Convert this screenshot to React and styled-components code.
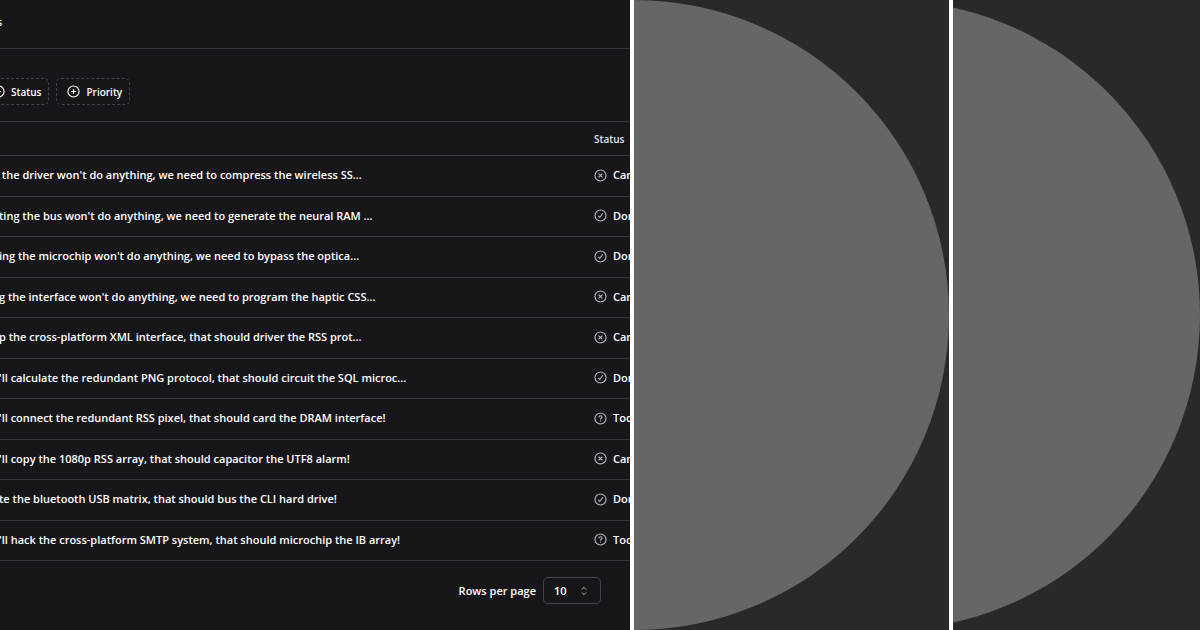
import styled, { createGlobalStyle, css } from 'styled-components';

const palette = {
	panel: '#17161b',
	line: '#37363c',
	text: '#ffffff',
	icon: '#b9b9be',
	dark: '#292929',
	gray: '#666666',
};

const GlobalStyle = createGlobalStyle`
	*{
		box-sizing: border-box;
	}
	body{
		margin: 0;
		background: #fff;
		color: ${palette.text};
		font-family: 'Open Sans', 'Noto Sans', sans-serif;
		font-size: 11px;
		font-weight: 600;
		line-height: 16px;
	}
`;

const Gallery = styled.main`
	display: grid;
	grid-template-columns: 630fr 315fr 247fr;
	gap: 4px;
	min-height: 100vh;
	overflow: hidden;
`;

const TaskPanel = styled.section`
	min-width: 0;
	overflow: hidden;
	background: ${palette.panel};
`;

const Header = styled.header`
	display: flex;
	align-items: center;
	justify-content: flex-start;
	height: 49px;
	padding-bottom: 5px;
	border-bottom: 1px solid ${palette.line};
`;

const Crumb = styled.a`
	width: 2px;
	display: flex;
	justify-content: flex-end;
	color: inherit;
	text-decoration: none;
	font-size: 10px;
`;

const Toolbar = styled.div`
	display: flex;
	gap: 7px;
	margin-left: -19px;
	padding: 29px 0 16px;
`;

const FilterButton = styled.button`
	display: flex;
	align-items: center;
	gap: 6px;
	height: 27px;
	padding: 0 7px 0 10px;
	border: 1px dashed #45444a;
	border-radius: 5px;
	background: transparent;
	color: inherit;
	font: inherit;
	font-size: 10px;
	cursor: pointer;
	svg{
		flex: none;
	}
`;

const TaskTable = styled.table`
	width: 100%;
	table-layout: fixed;
	border-collapse: separate;
	border-spacing: 0;
	border-top: 1px solid ${palette.line};
`;

const cell = css`
	padding: 0;
	border-bottom: 1px solid ${palette.line};
	text-align: left;
	vertical-align: middle;
	white-space: pre;
`;

const HeadCell = styled.th`
	${cell}
	width: ${({$width}) => $width || 'auto'};
	height: 34px;
	font-size: 10px;
	font-weight: 600;
	color: #e4e4e7;
`;

const Row = styled.tr`
	height: 40px;
	&:nth-child(odd){
		height: 41px;
	}
`;

const Cell = styled.td`
	${cell}
	padding-bottom: 2px;
`;

const TitleCell = styled(Cell)`
	text-indent: -1px;
`;

const StatusLabel = styled.span`
	display: flex;
	align-items: center;
	gap: 6px;
	svg{
		flex: none;
		color: ${palette.icon};
	}
`;

const Footer = styled.footer`
	display: flex;
	align-items: center;
	justify-content: flex-end;
	gap: 7px;
	padding: 16px 29px 26px 0;
`;

const SelectBox = styled.span`
	position: relative;
	display: flex;
	svg{
		position: absolute;
		top: 8px;
		right: 11px;
		color: ${palette.icon};
		pointer-events: none;
	}
`;

const PageSelect = styled.select`
	appearance: none;
	width: 58px;
	height: 27px;
	padding: 0 10px;
	border: 1px solid #45444a;
	border-radius: 5px;
	background: transparent;
	color: inherit;
	font: inherit;
`;

const CirclePanel = styled.section`
	display: flex;
	justify-content: flex-end;
	min-width: 0;
	overflow: hidden;
	background: ${palette.dark};
`;

const Circle = styled.div`
	flex: none;
	height: 100%;
	aspect-ratio: 1;
	border-radius: 50%;
	background: ${palette.gray};
`;

const marks = {
	plus: 'M7.5 4.5v6M4.5 7.5h6',
	Canceled: 'M5.3 5.3l4.4 4.4M9.7 5.3l-4.4 4.4',
	Done: 'M4.8 7.9l1.9 1.9 3.5-4.9',
	Todo: 'M5.7 6c0-1 .7-1.7 1.8-1.7S9.3 5 9.3 5.9c0 1.3-1.8 1.3-1.8 2.8M7.5 9.9v1.1',
};

const CircleIcon = ({name, size = 13}) => (
	<svg width={size} height={size} viewBox="0 0 15 15" fill="none" stroke="currentColor" strokeWidth="1.3" aria-hidden="true">
		<circle cx="7.5" cy="7.5" r="6.4" />
		<path d={marks[name]} />
	</svg>
);

const CaretSort = () => (
	<svg width="12" height="12" viewBox="0 0 15 15" fill="none" stroke="currentColor" strokeWidth="1.2" aria-hidden="true">
		<path d="M4.8 5.6L7.5 2.9l2.7 2.7M4.8 9.4l2.7 2.7 2.7-2.7" />
	</svg>
);

const tasks = [
	{id: 1, title: " the driver won't do anything, we need to compress the wireless SS...", status: 'Canceled'},
	{id: 2, title: "ting the bus won't do anything, we need to generate the neural RAM ...", status: 'Done'},
	{id: 3, title: "ing the microchip won't do anything, we need to bypass the optica...", status: 'Done'},
	{id: 4, title: "g the interface won't do anything, we need to program the haptic CSS...", status: 'Canceled'},
	{id: 5, title: "p the cross-platform XML interface, that should driver the RSS prot...", status: 'Canceled'},
	{id: 6, title: "'ll calculate the redundant PNG protocol, that should circuit the SQL microc...", status: 'Done'},
	{id: 7, title: "'ll connect the redundant RSS pixel, that should card the DRAM interface!", status: 'Todo'},
	{id: 8, title: "'ll copy the 1080p RSS array, that should capacitor the UTF8 alarm!", status: 'Canceled'},
	{id: 9, title: "te the bluetooth USB matrix, that should bus the CLI hard drive!", status: 'Done'},
	{id: 10, title: "'ll hack the cross-platform SMTP system, that should microchip the IB array!", status: 'Todo'},
];

const TaskItem = ({task}) => (
	<Row>
		<TitleCell>{task.title}</TitleCell>
		<Cell>
			<StatusLabel><CircleIcon name={task.status} />{task.status}</StatusLabel>
		</Cell>
	</Row>
)

const App = () => {
	return(
	<>
		<GlobalStyle />
		<Gallery>
			<TaskPanel>
				<Header><Crumb href="#tasks">s</Crumb></Header>
				<Toolbar>
					<FilterButton type="button"><CircleIcon name="plus" />Status</FilterButton>
					<FilterButton type="button"><CircleIcon name="plus" />Priority</FilterButton>
				</Toolbar>
				<TaskTable>
					<thead>
						<tr>
							<HeadCell aria-label="Title" />
							<HeadCell $width="36px">Status</HeadCell>
						</tr>
					</thead>
					<tbody>
						{tasks.map(task=>(
							<TaskItem task={task} key={task.id} />
						))}
					</tbody>
				</TaskTable>
				<Footer>
					<label htmlFor="rows">Rows per page</label>
					<SelectBox>
						<PageSelect id="rows" defaultValue="10">
							<option>10</option>
							<option>20</option>
							<option>50</option>
						</PageSelect>
						<CaretSort />
					</SelectBox>
				</Footer>
			</TaskPanel>
			<CirclePanel><Circle /></CirclePanel>
			<CirclePanel><Circle /></CirclePanel>
		</Gallery>
	</>
	)
}

export default App;
